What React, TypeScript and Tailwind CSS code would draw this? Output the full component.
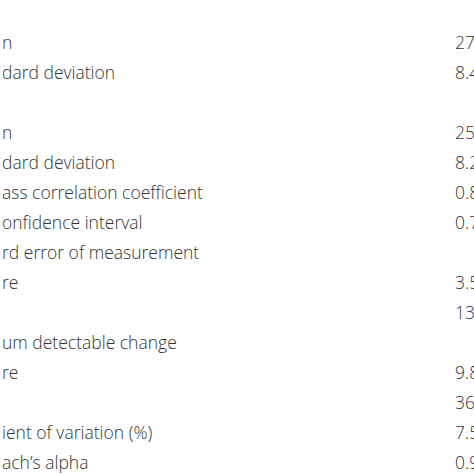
import React from "react";

const rows: { label: string; value: string }[] = [
  { label: "n", value: "27.4" },
  { label: "dard deviation", value: "8.42" },
  { label: "", value: "" },
  { label: "n", value: "25.1" },
  { label: "dard deviation", value: "8.21" },
  { label: "ass correlation coefficient", value: "0.86" },
  { label: "onfidence interval", value: "0.72" },
  { label: "rd error of measurement", value: "" },
  { label: "re", value: "3.51" },
  { label: "", value: "13.4" },
  { label: "um detectable change", value: "" },
  { label: "re", value: "9.81" },
  { label: "", value: "36.2" },
  { label: "ient of variation (%)", value: "7.54" },
  { label: "ach’s alpha", value: "0.93" },
];

export default function App() {
  return (
    <div className="w-[474px] h-[474px] overflow-hidden bg-white pt-[27px] text-[#333333] font-['Open_Sans',sans-serif] text-[17.5px] font-light">
      {rows.map((row, i) => (
        <div key={i} className="h-[30px] flex items-center whitespace-nowrap">
          <div className="flex-1 pl-[2px]">{row.label}</div>
          <div className="w-[19px] shrink-0">{row.value}</div>
        </div>
      ))}
    </div>
  );
}
